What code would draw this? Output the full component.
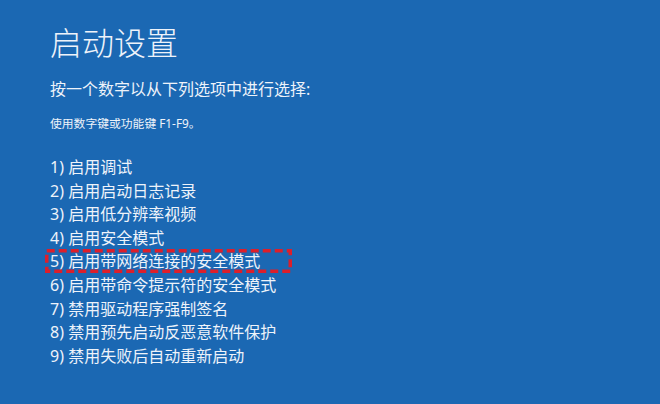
const options = [
  '启用调试',
  '启用启动日志记录',
  '启用低分辨率视频',
  '启用安全模式',
  '启用带网络连接的安全模式',
  '启用带命令提示符的安全模式',
  '禁用驱动程序强制签名',
  '禁用预先启动反恶意软件保护',
  '禁用失败后自动重新启动'
];

export default function App() {
  return (
    <div
      className="w-[660px] h-[404px] overflow-hidden bg-[#1b68b3] text-[#eef3fa] pl-[50px] pt-[23px]"
      style={{ fontFamily: '"Noto Sans", "Noto Sans CJK SC", sans-serif' }}
    >
      <h1 className="text-[32px] leading-[40px] font-light">启动设置</h1>
      <p className="mt-[14px] text-[16px] leading-[24px]">按一个数字以从下列选项中进行选择:</p>
      <p className="mt-[14px] text-[11.8px] leading-[16px]">使用数字键或功能键 F1-F9。</p>
      <ul className="mt-[25px]">
        {options.map((label, i) => (
          <li key={i} className="relative text-[16px] leading-[23.6px]">
            {i + 1}) {label}
            {i === 4 && (
              <svg
                className="absolute -left-[5px] -top-[1px] overflow-visible"
                width="247"
                height="24"
              >
                <rect
                  x="1.75"
                  y="1.75"
                  width="243.5"
                  height="20.5"
                  fill="none"
                  stroke="#dc1f2b"
                  strokeWidth="3.5"
                  strokeDasharray="8 4"
                />
              </svg>
            )}
          </li>
        ))}
      </ul>
    </div>
  );
}
